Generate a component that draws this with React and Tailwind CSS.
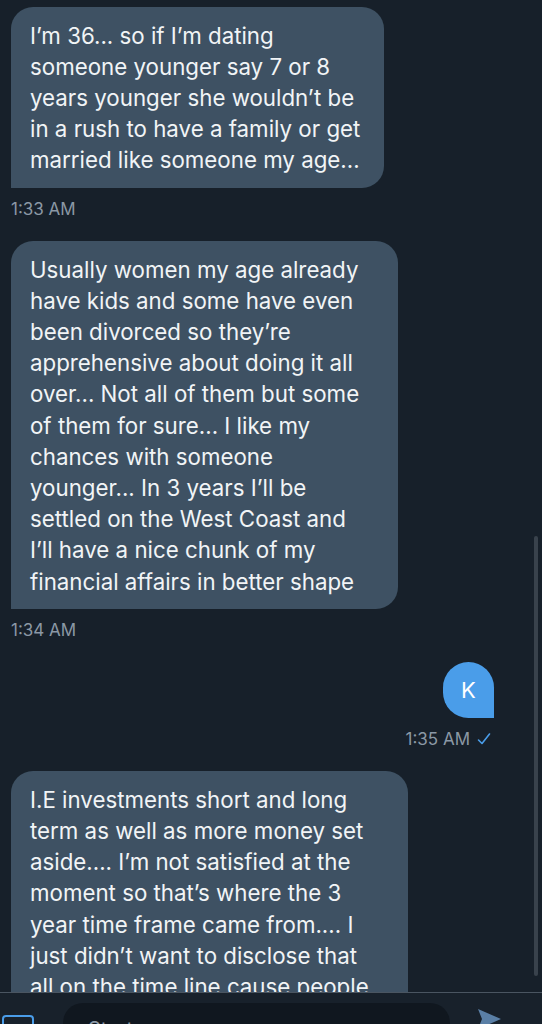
import React from 'react';

const font = { fontFamily: 'Inter, "Noto Sans", sans-serif' };

const msg1 = [
  'I’m 36... so if I’m dating',
  'someone younger say 7 or 8',
  'years younger she wouldn’t be',
  'in a rush to have a family or get',
  'married like someone my age...',
];

const msg2 = [
  'Usually women my age already',
  'have kids and some have even',
  'been divorced so they’re',
  'apprehensive about doing it all',
  'over... Not all of them but some',
  'of them for sure... I like my',
  'chances with someone',
  'younger... In 3 years I’ll be',
  'settled on the West Coast and',
  'I’ll have a nice chunk of my',
  'financial affairs in better shape',
];

const msg3 = [
  'I.E investments short and long',
  'term as well as more money set',
  'aside.... I’m not satisfied at the',
  'moment so that’s where the 3',
  'year time frame came from.... I',
  'just didn’t want to disclose that',
  'all on the time line cause people',
  'would’ve took it out of context',
];

function Received({ lines, width }) {
  return (
    <div
      className="shrink-0 rounded-t-[22px] rounded-br-[22px] bg-[#3e5163] px-[19px] py-[12.5px] text-[22.3px] leading-[31.2px] text-[#f1f4f6]"
      style={{ width }}
    >
      {lines.map((l, i) => (
        <div key={i} className="whitespace-nowrap">{l}</div>
      ))}
    </div>
  );
}

function Time({ children }) {
  return <div className="mt-[10px] text-[17px] leading-[22px] text-[#8b98a5]">{children}</div>;
}

export default function App() {
  return (
    <div className="relative flex h-[1024px] w-[542px] flex-col overflow-hidden bg-[#17202a]" style={font}>
      <div className="flex flex-1 flex-col overflow-hidden px-[11px] pt-[7px]">
        <Received lines={msg1} width={373} />
        <Time>1:33 AM</Time>

        <div className="mt-[21px]" />
        <Received lines={msg2} width={387} />
        <Time>1:34 AM</Time>

        <div className="mt-[21px] flex flex-col items-end pr-[37px]">
          <div className="flex h-[56px] w-[51px] items-center justify-center rounded-t-[26px] rounded-bl-[26px] bg-[#4a9de9] text-[22px] text-white">
            K
          </div>
          <div className="mr-[3px] mt-[10px] flex items-center gap-[7px] text-[17px] leading-[22px] text-[#8b98a5]">
            <span>1:35 AM</span>
            <svg width="14" height="14" viewBox="0 0 14 14" fill="none">
              <path d="M1.5 8 L5 11.5 L12.5 2" stroke="#4a9de9" strokeWidth="1.6" strokeLinecap="round" strokeLinejoin="round" />
            </svg>
          </div>
        </div>

        <div className="mt-[21px]" />
        <Received lines={msg3} width={397} />
      </div>

      {/* scrollbar */}
      <div className="absolute left-[534px] top-[536px] h-[440px] w-[4px] rounded-full bg-[#39424c]" />

      {/* composer */}
      <div className="relative h-[32px] shrink-0 border-t border-[#4a5561] bg-[#18212b]">
        <div className="absolute left-[2px] top-[22px] h-[24px] w-[32px] rounded-[4px] border-2 border-[#4a9de9]" />
        <div className="absolute left-[63px] top-[10px] h-[40px] w-[387px] rounded-full bg-[#10171f] pl-[25px] pt-[14px] text-[20px] leading-[24px] text-[#8b98a5]">
          Start a message
        </div>
        <svg className="absolute left-[474px] top-[12px]" width="30" height="30" viewBox="0 0 30 30" fill="none">
          <path d="M4 4 L27 14 L4 24 L8 14 Z" fill="#5a7fa6" />
        </svg>
      </div>
    </div>
  );
}
